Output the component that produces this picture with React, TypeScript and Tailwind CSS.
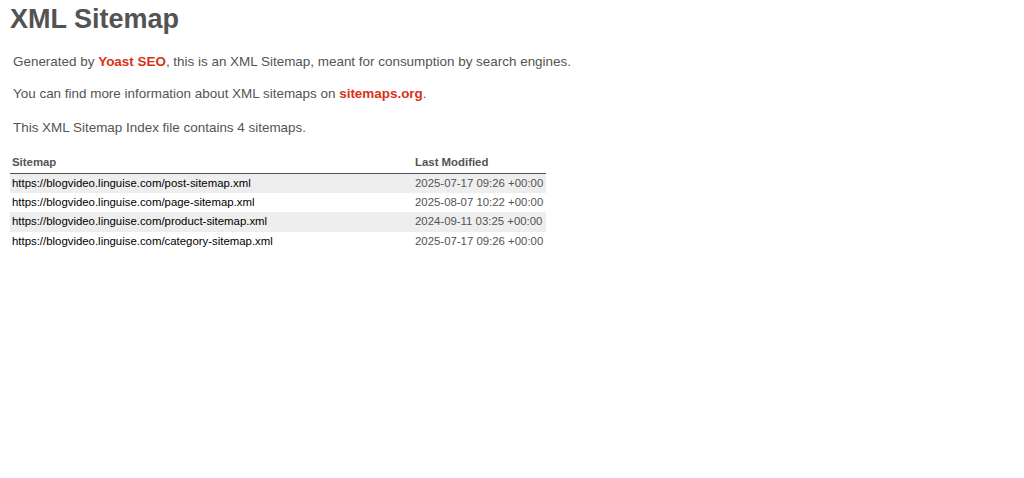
import React from 'react';

const SITEMAPS = [
  { loc: 'https://blogvideo.linguise.com/post-sitemap.xml', lastmod: '2025-07-17 09:26 +00:00' },
  { loc: 'https://blogvideo.linguise.com/page-sitemap.xml', lastmod: '2025-08-07 10:22 +00:00' },
  { loc: 'https://blogvideo.linguise.com/product-sitemap.xml', lastmod: '2024-09-11 03:25 +00:00' },
  { loc: 'https://blogvideo.linguise.com/category-sitemap.xml', lastmod: '2025-07-17 09:26 +00:00' },
];

export default function App() {
  return (
    <div className="min-h-[478px] bg-white px-[10px] pt-[4px] text-[13.45px] text-[#545353] font-['Liberation_Sans',Arial,sans-serif]">
      <h1 className="text-[27px] font-bold leading-[30px]">XML Sitemap</h1>

      <p className="mx-[3px] mt-[20px] leading-[15.6px]">
        Generated by{' '}
        <a href="#" className="font-bold text-[#da3114]">Yoast SEO</a>, this is an XML Sitemap, meant for
        consumption by search engines.
      </p>
      <p className="mx-[3px] mt-[16px] leading-[15.6px]">
        You can find more information about XML sitemaps on{' '}
        <a href="#" className="font-bold text-[#da3114]">sitemaps.org</a>.
      </p>
      <p className="mx-[3px] mt-[19px] leading-[15.6px]">This XML Sitemap Index file contains 4 sitemaps.</p>

      <table className="mt-[17px] w-[536px] border-collapse text-[11.4px]">
        <thead>
          <tr className="h-[21px] border-b border-[#545353]">
            <th className="w-[403px] px-[2px] text-left font-bold">Sitemap</th>
            <th className="px-[2px] text-left font-bold">Last Modified</th>
          </tr>
        </thead>
        <tbody>
          {SITEMAPS.map((s, i) => (
            <tr key={s.loc} className={`h-[19.3px] ${i % 2 === 0 ? 'bg-[#eeeeee]' : 'bg-white'}`}>
              <td className="px-[2px]">
                <a href="#" className="text-black">{s.loc}</a>
              </td>
              <td className="px-[2px]">{s.lastmod}</td>
            </tr>
          ))}
        </tbody>
      </table>
    </div>
  );
}
